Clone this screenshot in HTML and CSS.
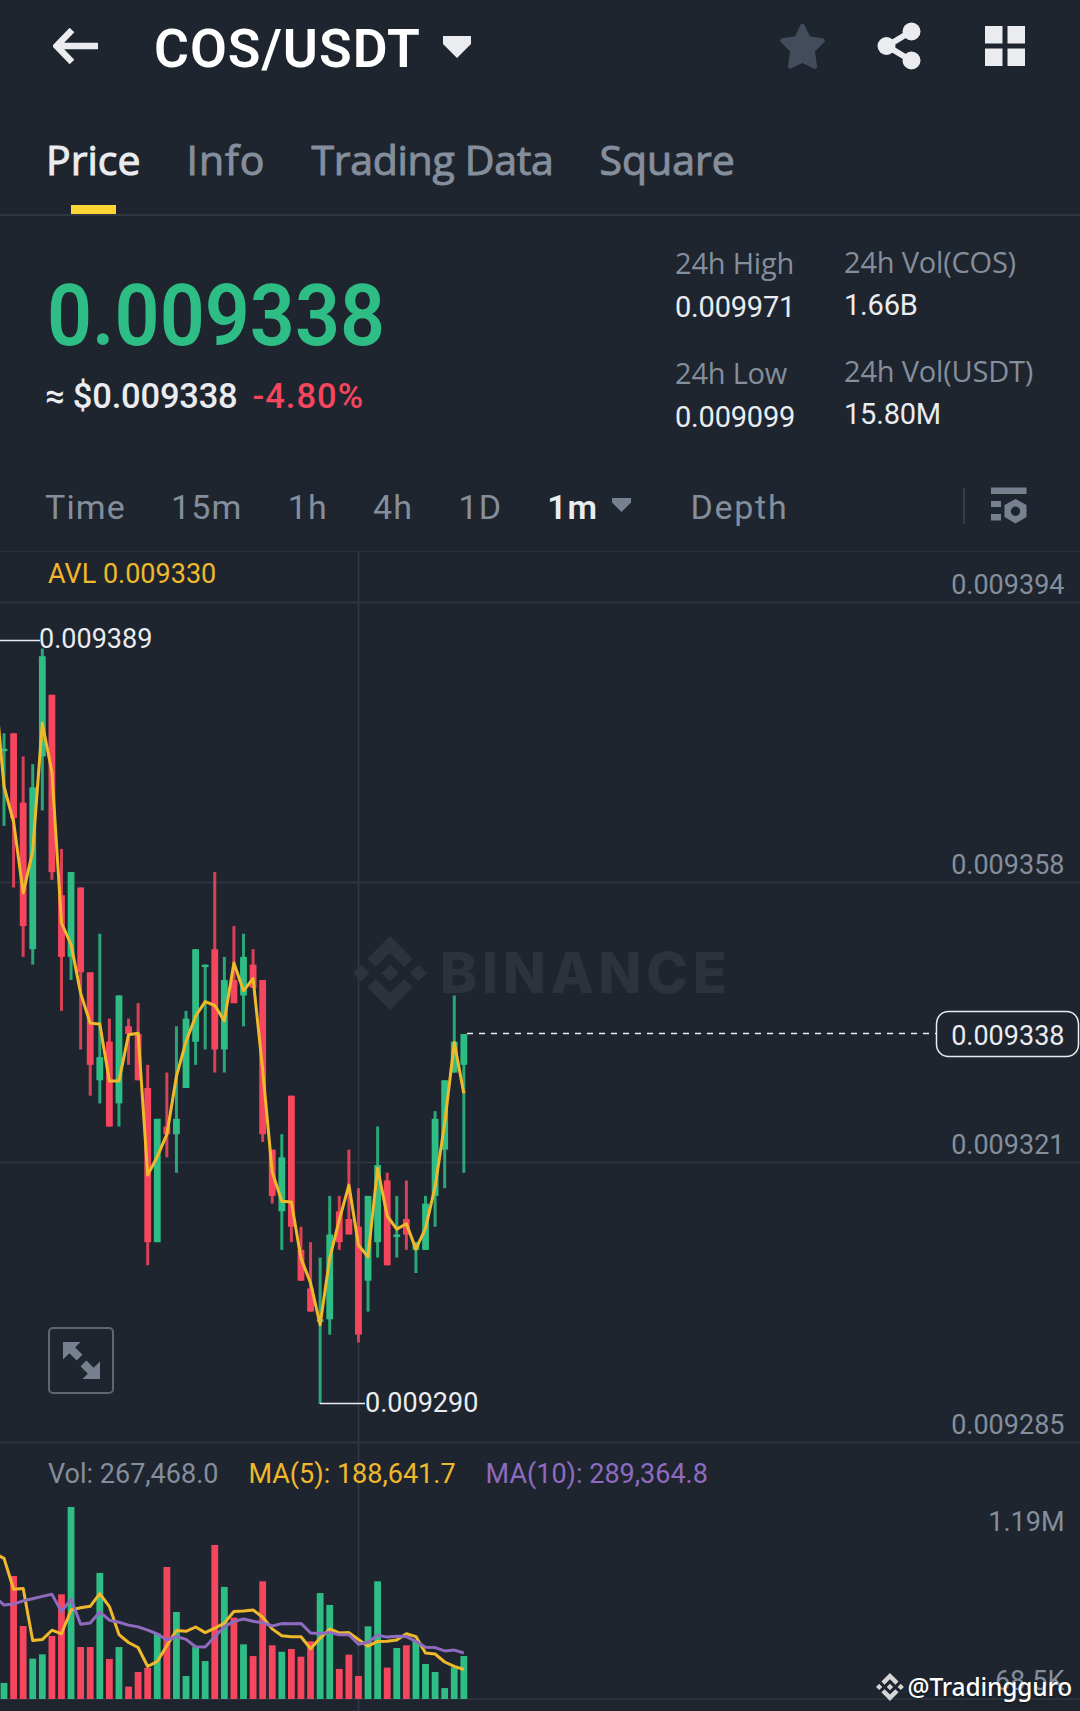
FILE: index.html
```html
<!DOCTYPE html>
<html lang="en">
<head>
    <meta charset="UTF-8">
    <meta name="viewport" content="width=device-width, initial-scale=1.0">
    <title>COS/USDT</title>
    <link rel="stylesheet" href="styles.css">
</head>
<body>
    <header class="header">
        <svg class="back" width="46" height="36" viewBox="0 0 46 36">
            <path d="M19 2L3.5 18L19 34M4 18H45" fill="none" stroke="#eaecef" stroke-width="6.5"/>
        </svg>
        <h1>COS/USDT</h1>
        <svg class="caret" width="28" height="22" viewBox="0 0 28 22">
            <path d="M0 0H28V8L14 22L0 8Z" fill="#eaecef"/>
        </svg>
        <div class="header-icons">
            <svg class="star" width="45" height="47" viewBox="0 0 45 47">
                <path d="M22.5 3L28.4 15.5L42.5 17.6L32.6 27.8L34.8 43.6L22.5 37.4L10.2 43.6L12.4 27.8L2.5 17.6L16.6 15.5Z" fill="#434c5a" stroke="#434c5a" stroke-width="4.5" stroke-linejoin="round"/>
            </svg>
            <svg width="44" height="48" viewBox="0 0 44 48">
                <path d="M34 9.500L10 24L34 38.500" fill="none" stroke="#eaecef" stroke-width="6"/>
                <circle cx="34.500" cy="9.500" r="9" fill="#eaecef"/>
                <circle cx="9.500" cy="24" r="9" fill="#eaecef"/>
                <circle cx="34.500" cy="38.500" r="9" fill="#eaecef"/>
            </svg>
            <svg width="40" height="40" viewBox="0 0 40 40">
                <path d="M0 0H17.500V17.500H0ZM22.500 0H40V17.500H22.500ZM0 22.500H17.500V40H0ZM22.500 22.500H40V40H22.500Z" fill="#eaecef"/>
            </svg>
        </div>
    </header>

    <nav class="tabs">
        <a class="tab active">Price</a>
        <a class="tab tab-info">Info</a>
        <a class="tab tab-data">Trading Data</a>
        <a class="tab">Square</a>
    </nav>

    <section class="ticker">
        <div class="ticker-main">
            <div class="last-price">0.009338</div>
            <div class="sub-price">
                <span class="fiat">≈ $0.009338</span>
                <span class="change">-4.80%</span>
            </div>
        </div>
        <div class="stats">
            <div class="stat-col">
                <div class="stat"><span>24h High</span><b>0.009971</b></div>
                <div class="stat"><span>24h Low</span><b>0.009099</b></div>
            </div>
            <div class="stat-col stat-col-vol">
                <div class="stat"><span>24h Vol(COS)</span><b>1.66B</b></div>
                <div class="stat"><span>24h Vol(USDT)</span><b>15.80M</b></div>
            </div>
        </div>
    </section>

    <div class="intervals">
        <span>Time</span>
        <span>15m</span>
        <span>1h</span>
        <span>4h</span>
        <span>1D</span>
        <span class="active">1m</span>
        <svg class="interval-caret" width="19" height="14" viewBox="0 0 19 14">
            <path d="M0 0H19V4.500L9.500 14L0 4.500Z" fill="#76808f"/>
        </svg>
        <span class="depth">Depth</span>
        <div class="interval-tools">
            <i class="divider"></i>
            <svg width="36" height="37" viewBox="0 0 36 37">
                <path d="M0 0.500H35.500V7H0ZM0 14H10V20H0ZM0 27H10V33.500H0Z" fill="#76808f"/>
                <path fill-rule="evenodd" d="M24.500 12L35.500 18V30L24.500 36.500L13.500 30V18ZM24.500 19.500A4.700 4.700 0 1 0 24.500 28.900A4.700 4.700 0 1 0 24.500 19.500Z" fill="#76808f"/>
            </svg>
        </div>
    </div>

    <main class="chart">
        <svg id="chart" width="1080" height="1159" viewBox="0 0 1080 1159">
            <g class="watermark">
                <path transform="translate(353 384) scale(0.5845)" d="M38.730 53.200L63.320 28.620L87.920 53.220L102.220 38.910L63.320 0L24.420 38.900ZM0 63.310L14.300 49L28.610 63.310L14.300 77.610ZM38.730 73.410L63.320 98L87.920 73.400L102.230 87.690L63.330 126.600L24.420 87.720ZM98 63.310L112.300 49L126.610 63.300L112.300 77.620ZM77.830 63.300L63.320 48.780L48.810 63.280L63.320 77.780Z"/>
                <text x="440" y="441" textLength="287">BINANCE</text>
            </g>
            <g id="grid" class="grid"></g>
            <g id="candles"></g>
            <g id="volumes"></g>
            <polyline id="avl" class="line line-avl"/>
            <polyline id="ma5" class="line line-avl"/>
            <polyline id="ma10" class="line line-ma10"/>

            <path class="marker" d="M0 88.500H40M320 851.500H365"/>
            <text class="mark-text" x="39" y="95.500">0.009389</text>
            <text class="mark-text" x="365" y="859.500">0.009290</text>

            <path class="price-line" d="M467 481.500H936"/>
            <rect class="price-box" x="936.500" y="459.500" width="142" height="45" rx="12"/>
            <text class="mark-text" x="1064.500" y="492.500" text-anchor="end">0.009338</text>

            <g class="axis" text-anchor="end">
                <text x="1064.500" y="41.500">0.009394</text>
                <text x="1064.500" y="321.500">0.009358</text>
                <text x="1064.500" y="601.500">0.009321</text>
                <text x="1064.500" y="881.500">0.009285</text>
                <text x="1064.500" y="978.500">1.19M</text>
                <text x="1064.500" y="1137.500">68.5K</text>
            </g>
        </svg>

        <div class="legend legend-price">
            <span class="yellow">AVL 0.009330</span>
        </div>
        <div class="legend legend-volume">
            <span>Vol: 267,468.0</span>
            <span class="yellow">MA(5): 188,641.7</span>
            <span class="purple">MA(10): 289,364.8</span>
        </div>

        <button class="expand" aria-label="Full screen">
            <svg width="37" height="37" viewBox="0 0 38 38">
                <path d="M0 0H18L12.500 5.500L20 13L14 19L6.500 11.500L0 18ZM38 38H20L25.500 32.500L18 25L24 19L31.500 26.500L38 20Z" fill="#76808f"/>
            </svg>
        </button>

        <div class="author">
            <svg width="28" height="28" viewBox="0 0 127 127">
                <path fill="#d6d6d6" d="M38.730 53.200L63.320 28.620L87.920 53.220L102.220 38.910L63.320 0L24.420 38.900ZM0 63.310L14.300 49L28.610 63.310L14.300 77.610ZM38.730 73.410L63.320 98L87.920 73.400L102.230 87.690L63.330 126.600L24.420 87.720ZM98 63.310L112.300 49L126.610 63.300L112.300 77.620ZM77.830 63.300L63.320 48.780L48.810 63.280L63.320 77.780Z"/>
            </svg>
            <span>@Tradingguro</span>
        </div>
    </main>

    <script src="chart.js"></script>
</body>
</html>
```
FILE: styles.css
```css
* {
    box-sizing: border-box;
}

body {
    margin: 0;
    width: 1080px;
    height: 1711px;
    overflow: hidden;
    background: #1f252f;
    color: #eaecef;
    font-family: Roboto, "Liberation Sans", sans-serif;
}

svg {
    display: block;
    flex-shrink: 0;
}

/* header */
.header {
    display: flex;
    align-items: center;
    height: 92px;
    padding: 0 55px 0 53px;
}

.header h1 {
    margin: 6px 0 0 55px;
    width: 266px;
    font-size: 53.5px;
    font-weight: 600;
    letter-spacing: 1px;
    line-height: 60px;
    color: #fff;
    white-space: nowrap;
}

.caret {
    margin: 2px 0 0 23px;
}

.header-icons {
    display: flex;
    align-items: center;
    margin-left: auto;
}

.star {
    margin-top: 1px;
}

.header-icons svg + svg {
    margin-left: 52px;
}

.header-icons svg:last-child {
    margin-left: 64px;
}

/* tabs */
.tabs {
    display: flex;
    gap: 46px;
    height: 124px;
    padding-left: 46px;
    border-bottom: 2px solid #2f3641;
    font-family: "Open Sans", sans-serif;
}

.tab {
    position: relative;
    padding-top: 34px;
    font-size: 41px;
    line-height: 66px;
    color: #848e9c;
    white-space: nowrap;
    -webkit-text-stroke: 1px currentColor;
}

.tab.active {
    color: #eaecef;
}

.tab-info {
    letter-spacing: 1px;
}

.tab-data {
    letter-spacing: -0.3px;
}

.tab.active::after {
    content: "";
    position: absolute;
    left: 50%;
    bottom: 0;
    width: 45px;
    height: 9px;
    margin-left: -22px;
    background: #fcd535;
}

/* ticker */
.ticker {
    display: flex;
    justify-content: space-between;
    height: 248px;
    padding: 0 86px 0 45px;
}

.ticker-main {
    padding-top: 57px;
}

.last-price {
    width: 370px;
    margin-left: 2px;
    font-size: 86px;
    font-weight: 600;
    line-height: 86px;
    color: #2ebd85;
    transform: scaleX(0.918);
    transform-origin: left;
}

.sub-price {
    display: flex;
    gap: 15px;
    margin-top: 17px;
    font-size: 34.5px;
    font-weight: 500;
    line-height: 40px;
}

.fiat {
    letter-spacing: -0.2px;
}

.change {
    color: #f6465d;
    letter-spacing: 1px;
}

.stats {
    display: grid;
    grid-template-columns: 169px 150px;
    width: 319px;
    padding-top: 29px;
}

.stat-col-vol {
    margin-top: -1px;
}

.stat {
    height: 110px;
    white-space: nowrap;
}

.stat span,
.stat b {
    display: block;
    line-height: 36px;
}

.stat span {
    font-family: "Open Sans", sans-serif;
    font-size: 29px;
    letter-spacing: -0.2px;
    color: #848e9c;
}

.stat b {
    margin-top: 8px;
    font-size: 29px;
    font-weight: 400;
    letter-spacing: -0.2px;
}

.stat-col-vol .stat {
    height: 109px;
}

.stat-col-vol b {
    margin-top: 7px;
}

/* intervals */
.intervals {
    display: flex;
    align-items: center;
    height: 88px;
    padding: 0 53px 2px 45px;
    border-bottom: 1px solid #2b323d;
    font-size: 34px;
    letter-spacing: 1.1px;
    color: #848e9c;
}

.intervals span + span {
    margin-left: 45.3px;
}

.intervals .active {
    font-weight: 600;
    letter-spacing: 0.6px;
    color: #eaecef;
}

.interval-caret {
    margin: -4px 0 0 14px;
}

.intervals .depth {
    margin-left: 60px;
    letter-spacing: 1.7px;
}

.interval-tools {
    display: flex;
    align-items: center;
    gap: 26px;
    margin: -2px 0 0 auto;
}

.divider {
    width: 2px;
    height: 36px;
    background: #353d49;
}

/* chart */
.chart {
    position: relative;
    height: 1159px;
}

.chart text {
    font-size: 27px;
}

.grid {
    stroke: #303742;
    stroke-width: 1.7;
}

.chart .watermark text {
    font-family: Inter, sans-serif;
    font-size: 56px;
    font-weight: 800;
}

.watermark {
    fill: #2d323d;
}

.up {
    fill: #2ebd85;
}

.down {
    fill: #f6465d;
}

.wick {
    opacity: 0.85;
}

.line {
    fill: none;
    stroke-width: 3;
    stroke-linejoin: round;
}

.line-avl {
    stroke: #f0b92b;
}

.line-ma10 {
    stroke: #8f6bc0;
}

.marker {
    fill: none;
    stroke: #eaecef;
    stroke-width: 1.5;
}

.mark-text {
    fill: #eaecef;
}

.price-line {
    stroke: #eaecef;
    stroke-width: 1.5;
    stroke-dasharray: 6 6;
}

.price-box {
    fill: #1f252f;
    stroke: #eaecef;
    stroke-width: 1.5;
}

.axis {
    fill: #848e9c;
}

/* overlays on the canvas */
.legend {
    position: absolute;
    left: 48px;
    display: flex;
    gap: 30px;
    font-size: 27px;
    line-height: 32px;
    color: #848e9c;
}

.legend-price {
    top: 6px;
}

.legend-volume {
    top: 906px;
}

.yellow {
    color: #f0b92b;
}

.purple {
    color: #8f6bc0;
}

.expand {
    position: absolute;
    left: 48px;
    top: 775px;
    display: flex;
    align-items: center;
    justify-content: center;
    width: 66px;
    height: 67px;
    padding: 0;
    border: 2px solid #5e6673;
    border-radius: 5px;
    background: none;
}

.author {
    position: absolute;
    right: 8px;
    bottom: 6px;
    display: flex;
    align-items: center;
    gap: 4px;
    font-family: "Noto Sans", sans-serif;
    font-size: 24.5px;
    font-weight: 500;
    letter-spacing: -0.15px;
    line-height: 36px;
    color: #fff;
    text-shadow: 0 1px 2px rgba(0, 0, 0, 0.5);
}
```
FILE: chart.js
```js
// [open, high, low, close, volume in K], prices in millionths above 0.009
const candles = [
    [375, 377, 365, 375, 100], [377, 377, 357, 366, 765], [368, 374, 348, 352, 454],
    [349, 373, 347, 370, 251], [374, 388, 367, 387, 278], [382, 382, 358, 359, 392],
    [356, 362, 341, 348, 651], [348, 359, 345, 359, 1194], [357, 357, 336, 346, 323],
    [346, 346, 330, 334, 323], [332, 351, 329, 335, 784], [337, 340, 326, 326, 249],
    [329, 343, 326, 343, 323], [339, 340, 334, 338, 77], [338, 342, 332, 332, 168],
    [331, 334, 308, 311, 193], [311, 327, 311, 327, 408], [326, 333, 322, 325, 821],
    [325, 339, 320, 327, 541], [331, 341, 331, 340, 143], [337, 349, 334, 349, 325],
    [347, 347, 336, 347, 236], [349, 359, 333, 336, 958], [336, 348, 333, 345, 697],
    [345, 352, 342, 342, 506], [343, 351, 339, 348, 340], [347, 349, 344, 344, 267],
    [345, 345, 324, 325, 732], [323, 323, 316, 317, 334], [315, 325, 310, 322, 294],
    [330, 330, 311, 313, 311], [310, 313, 306, 306, 263], [305, 311, 302, 302, 359],
    [301, 309, 290, 301, 659], [301, 317, 299, 312, 585], [315, 317, 310, 311, 187],
    [314, 323, 312, 312, 276], [313, 318, 298, 299, 143], [306, 317, 302, 317, 452],
    [311, 326, 309, 321, 732], [319, 320, 308, 308, 195], [312, 317, 309, 312, 317],
    [314, 319, 310, 312, 334], [310, 311, 307, 311, 363], [310, 317, 310, 316, 218],
    [317, 328, 313, 327, 168], [323, 332, 318, 332, 68], [333, 343, 333, 337, 197],
    [334, 338, 320, 338, 267]
];

// volumes of the ten minutes left of the visible range
const earlier = [612, 705, 254, 121, 138, 255, 1730, 424, 1876, 245];

const avl = [
    384, 370.1, 365.5, 356.3, 361.7, 378.3, 372, 352.4, 349.6, 343.3, 339.4, 339.3, 331.9,
    331.9, 337.9, 338.1, 319.7, 322.1, 325, 332.5, 337, 340.3, 342.2, 341.7, 339.7, 347.2,
    343.6, 345.2, 333.3, 320.1, 316.3, 316.2, 308.9, 305.7, 300.3, 308.9, 313.9, 318.4,
    310.6, 309.1, 320.6, 314.4, 312.7, 313.4, 310.1, 312.8, 318.2, 326.4, 336.9, 330.3
];

const STEP = 9.58;
const BASE = 1147;
const x = i => 4 + i * STEP;
const y = price => 482 + (338 - price) * 7.71;
const volY = volume => BASE - volume * 0.1608;

function rect(cls, cx, top, width, height) {
    return `<rect class="${cls}" x="${(cx - width / 2).toFixed(2)}" y="${top.toFixed(2)}" width="${width}" height="${height.toFixed(2)}"/>`;
}

function drawGrid() {
    let html = '';
    [50.5, 330.5, 610.5, 890.5, BASE].forEach(row => {
        html += `<line x1="0" x2="1080" y1="${row}" y2="${row}"/>`;
    });
    html += '<line x1="358.5" x2="358.5" y1="0" y2="1159"/>';
    document.getElementById('grid').innerHTML = html;
}

function drawCandles() {
    let bodies = '';
    let bars = '';
    candles.forEach(([open, high, low, close, volume], i) => {
        const dir = close >= open ? 'up' : 'down';
        const top = y(Math.max(open, close));
        const height = Math.max(Math.abs(open - close) * 7.71, 2.5);
        bodies += rect(dir + ' wick', x(i), y(high), 3, y(low) - y(high));
        bodies += rect(dir, x(i), top, 6.8, height);
        bars += rect(dir, x(i), volY(volume), 6.8, BASE - volY(volume));
    });
    document.getElementById('candles').innerHTML = bodies;
    document.getElementById('volumes').innerHTML = bars;
}

function movingAverage(period) {
    const all = earlier.concat(candles.map(c => c[4]));
    const result = [];
    for (let i = earlier.length - 1; i < all.length; i++) {
        const part = all.slice(i - period + 1, i + 1);
        result.push(part.reduce((a, b) => a + b, 0) / period);
    }
    return result;
}

// every series starts one candle before the left edge
function drawLine(id, values, scale) {
    const points = values.map((v, i) => `${x(i - 1).toFixed(1)},${scale(v).toFixed(1)}`);
    document.getElementById(id).setAttribute('points', points.join(' '));
}

drawGrid();
drawCandles();
drawLine('avl', avl, y);
drawLine('ma5', movingAverage(5), volY);
drawLine('ma10', movingAverage(10), volY);
```
